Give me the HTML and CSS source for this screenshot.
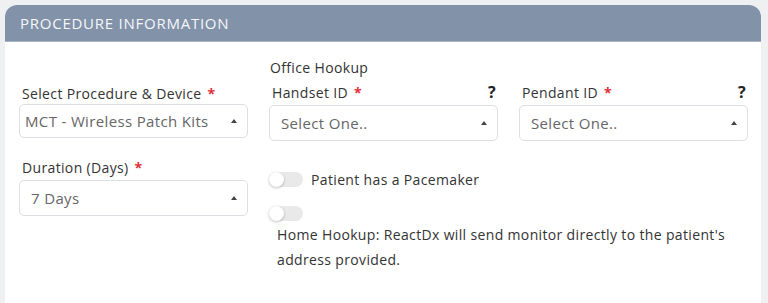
FILE: index.html
```html
<!DOCTYPE html>
<html lang="en">
<head>
    <meta charset="UTF-8">
    <meta name="viewport" content="width=device-width, initial-scale=1.0">
    <title>Procedure Information</title>
    <link rel="stylesheet" href="styles.css">
</head>
<body>
    <div class="panel">
        <div class="panel-header">Procedure Information</div>

        <div class="panel-body">
            <div class="form-row top-row">
                <div class="field first">
                    <label class="field-label">Select Procedure &amp; Device <span class="req">*</span></label>
                    <div class="select-box tight">
                        <span class="select-value">MCT - Wireless Patch Kits</span>
                        <span class="caret"></span>
                    </div>
                </div>

                <div class="field">
                    <div class="group-title">Office Hookup</div>
                    <div class="label-row">
                        <label class="field-label">Handset ID <span class="req">*</span></label>
                        <span class="help">?</span>
                    </div>
                    <div class="select-box">
                        <span class="select-value">Select One..</span>
                        <span class="caret"></span>
                    </div>
                </div>

                <div class="field">
                    <div class="label-row">
                        <label class="field-label">Pendant ID <span class="req">*</span></label>
                        <span class="help">?</span>
                    </div>
                    <div class="select-box">
                        <span class="select-value">Select One..</span>
                        <span class="caret"></span>
                    </div>
                </div>
            </div>

            <div class="form-row bottom-row">
                <div class="field">
                    <label class="field-label">Duration (Days) <span class="req">*</span></label>
                    <div class="select-box">
                        <span class="select-value">7 Days</span>
                        <span class="caret"></span>
                    </div>
                </div>

                <div class="options">
                    <div class="switch-row">
                        <span class="switch"></span>
                        <span class="switch-text">Patient has a Pacemaker</span>
                    </div>
                    <div class="switch-row">
                        <span class="switch"></span>
                    </div>
                    <p class="home-note">Home Hookup: ReactDx will send monitor directly to the patient's address provided.</p>
                </div>
            </div>
        </div>
    </div>
</body>
</html>
```

FILE: styles.css
```css
body {
    margin: 0;
    padding: 5px 7px 0 5px;
    background-color: #eef0f2;
    font-family: 'Open Sans', 'Liberation Sans', sans-serif;
    letter-spacing: 0.35px;
    color: #333;
}

.panel {
    background-color: #fff;
    border-radius: 12px 12px 0 0;
    min-height: 298px;
}

.panel-header {
    height: 36px;
    line-height: 36px;
    padding-left: 15px;
    background-color: #8292a9;
    border-bottom: 1px solid #a9b4c3;
    border-radius: 12px 12px 0 0;
    color: #f5f7fa;
    font-size: 15px;
    letter-spacing: 0.75px;
    text-transform: uppercase;
}

.panel-body {
    padding: 16px 13px 0 14px;
}

.form-row {
    display: grid;
    grid-template-columns: repeat(3, 1fr);
    column-gap: 21px;
}

.top-row {
    align-items: end;
}

.bottom-row {
    margin-top: 17px;
    align-items: start;
}

.group-title {
    font-size: 14px;
    line-height: 20px;
    padding-left: 1px;
    margin-bottom: 3px;
}

.label-row {
    display: flex;
    justify-content: space-between;
    align-items: center;
}

.field-label {
    display: block;
    font-size: 14px;
    line-height: 20px;
    padding-left: 3px;
    margin-bottom: 0;
}

.bottom-row .field-label {
    margin-bottom: 2px;
}

.req {
    color: #e0303a;
    font-weight: bold;
    margin-left: 2px;
}

.help {
    font-weight: bold;
    font-size: 16px;
    color: #222;
    margin-right: 2px;
    margin-bottom: 2px;
}

.select-box {
    display: flex;
    align-items: center;
    justify-content: space-between;
    height: 36px;
    box-sizing: border-box;
    padding: 0 10px 0 11px;
    border: 1px solid #dcdfe3;
    border-radius: 5px;
    background-color: #fff;
}

.first {
    margin-bottom: 3px;
}

.first .select-box {
    height: 34px;
}

.select-box.tight {
    padding-left: 5px;
}

.select-value {
    font-size: 15px;
    color: #666;
    white-space: nowrap;
    overflow: hidden;
}

.caret {
    width: 0;
    height: 0;
    border-left: 3px solid transparent;
    border-right: 3px solid transparent;
    border-bottom: 4px solid #444;
}

.options {
    grid-column: 2 / span 2;
    padding-top: 14px;
}

.switch-row {
    display: flex;
    align-items: center;
    gap: 8px;
    height: 15px;
    margin-bottom: 19px;
}

.switch-row + .switch-row {
    margin-bottom: 0;
}

.switch {
    position: relative;
    display: inline-block;
    width: 34px;
    height: 15px;
    border-radius: 8px;
    background-color: #e9e9e9;
}

.switch:after {
    content: "";
    position: absolute;
    left: 0;
    top: 0;
    width: 15px;
    height: 15px;
    border-radius: 50%;
    background-color: #fff;
    box-shadow: 0 1px 3px rgba(0,0,0,0.25);
}

.switch-text {
    font-size: 14px;
}

.home-note {
    margin: 1px 0 0 8px;
    font-size: 14px;
    line-height: 25px;
    max-width: 460px;
}
```
